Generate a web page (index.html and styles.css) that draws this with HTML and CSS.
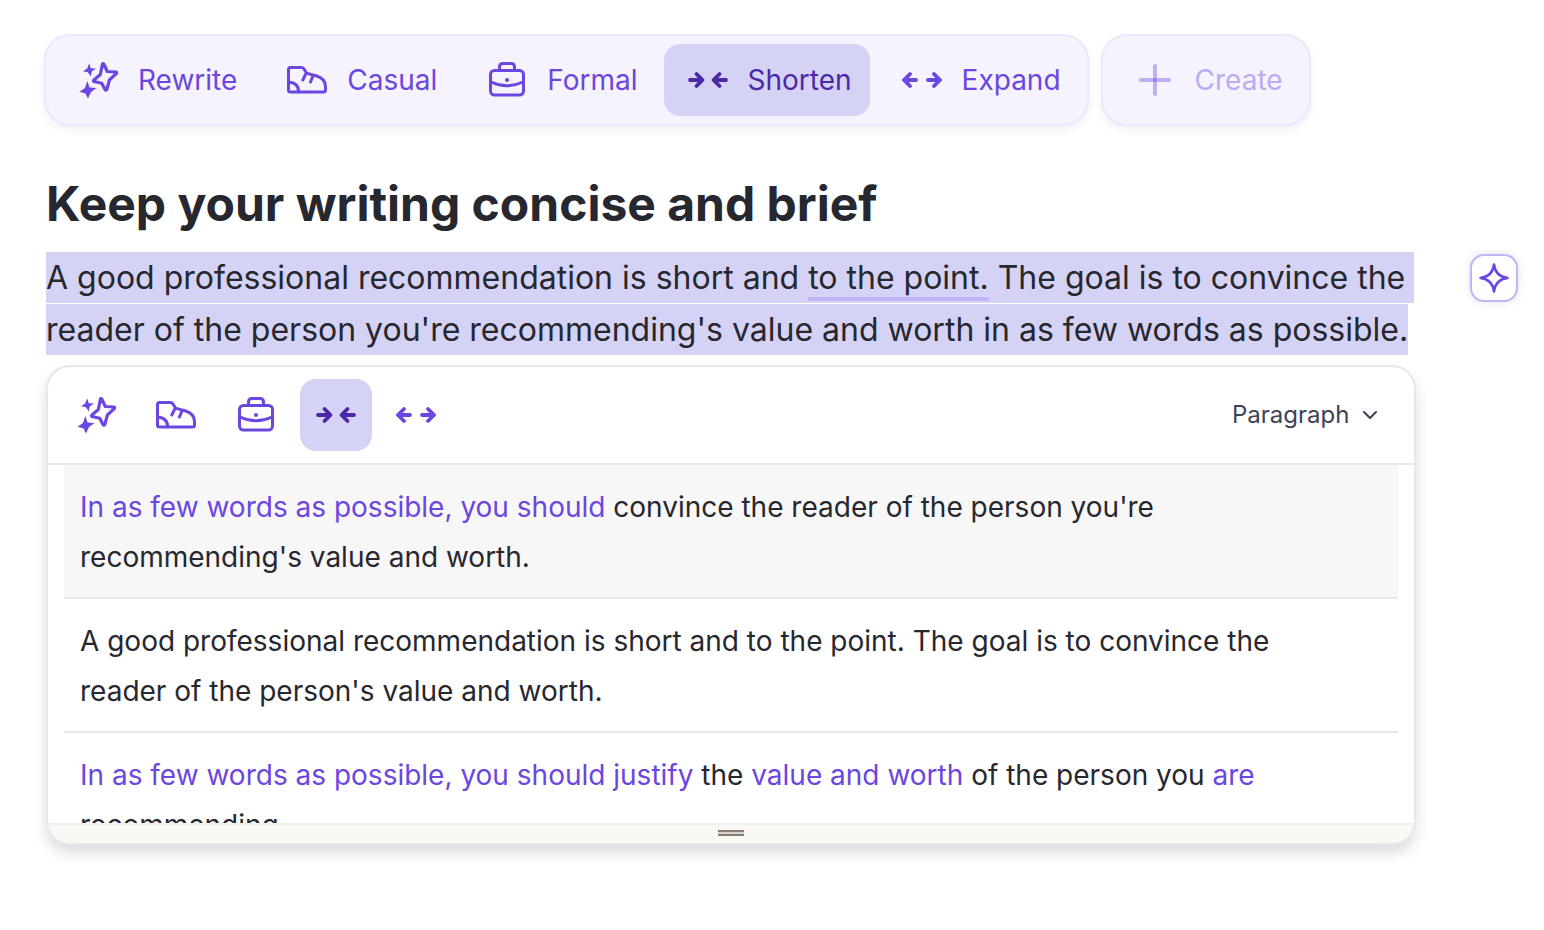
FILE: index.html
```html
<!DOCTYPE html>
<html lang="en">
<head>
<meta charset="utf-8">
<meta name="viewport" content="width=device-width, initial-scale=1">
<title>Rewriting assistant</title>
<link rel="stylesheet" href="styles.css">
</head>
<body>
<svg class="sprite" aria-hidden="true">
  <symbol id="i-rewrite" viewBox="0 0 40 40">
    <path d="M24.500 4Q25.300 2.800 26 4.500L29.300 11.500L38 12Q39.300 12.500 38.300 13.500L31.500 19.800L28.800 29.500Q27.800 31 27 29.500L23.700 23.200L16 21.500Q14.800 20.800 16 20L22.300 14.500Z" fill="none" stroke="currentColor" stroke-width="3.200" stroke-linejoin="round"/>
    <path d="M11.200 3.200L12.700 8.200L18 8.500L13.700 11.500L12.800 16.500L9.900 12.300L5 11.300L9.200 8.500ZM9.300 21L11.500 27.500L18.500 28L13 32L10 38.500L7.500 33.500L1.500 31.700L7 28Z" fill="currentColor"/>
  </symbol>
  <symbol id="i-casual" viewBox="0 0 40 40">
    <g fill="none" stroke="currentColor" stroke-width="3" stroke-linecap="round" stroke-linejoin="round">
      <path d="M3.500 7.500H14.500Q16 7.500 17 9L19 12.300Q19.700 13.300 21 13.600L29 15.700Q38.500 18.500 38.500 26.500V30Q38.500 32 36.500 32H3.500Q1.500 32 1.500 30V9.500Q1.500 7.500 3.500 7.500Z"/>
      <path d="M1.500 22.300Q11.500 22.500 11.700 32M18.500 14.500L15.800 20M25.700 16.500L23.500 22"/>
    </g>
  </symbol>
  <symbol id="i-formal" viewBox="0 0 40 40">
    <g fill="none" stroke="currentColor" stroke-width="3" stroke-linecap="round">
      <rect x="3.500" y="10.500" width="33" height="24.500" rx="4"/>
      <path d="M12.500 10V7Q12.500 3.500 16 3.500H24Q27.500 3.500 27.500 7V10M4 22Q20 29.500 36 22"/>
    </g>
    <circle cx="20" cy="20" r="2" fill="currentColor"/>
  </symbol>
  <symbol id="i-shorten" viewBox="0 0 40 40">
    <path d="M2 20H14M8.500 14L14.500 20L8.500 26M38 20H26M31.500 14L25.500 20L31.500 26" fill="none" stroke="currentColor" stroke-width="3.800" stroke-linecap="round" stroke-linejoin="round"/>
  </symbol>
  <symbol id="i-expand" viewBox="0 0 40 40">
    <path d="M14 20H2.500M8 14L2 20L8 26M26 20H37.500M32 14L38 20L32 26" fill="none" stroke="currentColor" stroke-width="3.800" stroke-linecap="round" stroke-linejoin="round"/>
  </symbol>
  <symbol id="i-plus" viewBox="0 0 40 40">
    <g stroke="#6b46e0" stroke-opacity=".4" stroke-width="4" stroke-linecap="round"><path d="M6 20H34"/><path d="M20 6V34"/></g>
  </symbol>
</svg>

<nav class="toolbars" aria-label="Writing tools">
  <div class="toolbar">
    <button class="tool" type="button"><svg class="icon" aria-hidden="true"><use href="#i-rewrite"/></svg>Rewrite</button>
    <button class="tool" type="button"><svg class="icon" aria-hidden="true"><use href="#i-casual"/></svg>Casual</button>
    <button class="tool" type="button"><svg class="icon" aria-hidden="true"><use href="#i-formal"/></svg>Formal</button>
    <button class="tool tool-active" type="button" aria-pressed="true"><svg class="icon" aria-hidden="true"><use href="#i-shorten"/></svg>Shorten</button>
    <button class="tool" type="button"><svg class="icon" aria-hidden="true"><use href="#i-expand"/></svg>Expand</button>
  </div>
  <div class="toolbar">
    <button class="tool tool-muted" type="button"><svg class="icon" aria-hidden="true"><use href="#i-plus"/></svg>Create</button>
  </div>
</nav>

<main class="editor">
  <h1 class="title">Keep your writing concise and brief</h1>
  <div class="columns">
    <div class="document">
      <p class="passage"><span class="selection">A good professional recommendation is short and <span class="hint">to the point.</span> The goal is to convince the reader of the person you're recommending's value and worth in as few words as possible.</span></p>
      <section class="card" aria-label="Suggestions">
        <header class="card-header">
          <div class="modes">
            <button class="mode" type="button" aria-label="Rewrite"><svg class="icon" aria-hidden="true"><use href="#i-rewrite"/></svg></button>
            <button class="mode" type="button" aria-label="Casual"><svg class="icon" aria-hidden="true"><use href="#i-casual"/></svg></button>
            <button class="mode" type="button" aria-label="Formal"><svg class="icon" aria-hidden="true"><use href="#i-formal"/></svg></button>
            <button class="mode mode-active" type="button" aria-label="Shorten" aria-pressed="true"><svg class="icon" aria-hidden="true"><use href="#i-shorten"/></svg></button>
            <button class="mode" type="button" aria-label="Expand"><svg class="icon" aria-hidden="true"><use href="#i-expand"/></svg></button>
          </div>
          <div class="scope">
            <select class="scope-select" aria-label="Scope"><option>Paragraph</option></select>
            <svg class="chevron" viewBox="0 0 16 16" aria-hidden="true"><path d="M2 5L8 11L14 5" fill="none" stroke="currentColor" stroke-width="2" stroke-linecap="round" stroke-linejoin="round"/></svg>
          </div>
        </header>
        <ul class="suggestions">
          <li class="suggestion suggestion-current"><em class="changed">In as few words as possible, you should</em> convince the reader of the person you're recommending's value and worth.</li>
          <li class="suggestion">A good professional recommendation is short and to the point. The goal is to convince the reader of the person's value and worth.</li>
          <li class="suggestion"><em class="changed">In as few words as possible, you should justify</em> the <em class="changed">value and worth</em> of the person you <em class="changed">are</em> recommending.</li>
        </ul>
        <footer class="card-footer"><span class="grip"></span></footer>
      </section>
    </div>
    <button class="assist" type="button" aria-label="Open assistant">
      <svg class="assist-icon" viewBox="0 0 32 32" aria-hidden="true"><path d="M16 2.500Q17.500 14.500 29.500 16Q17.500 17.500 16 29.500Q14.500 17.500 2.500 16Q14.500 14.500 16 2.500Z" fill="none" stroke="currentColor" stroke-width="2.500" stroke-linejoin="round"/></svg>
    </button>
  </div>
</main>
</body>
</html>
```
FILE: styles.css
```css
* { box-sizing: border-box; }
body {
  margin: 0;
  padding: 34px 26px 34px 44px;
  background: #fff;
  color: #27272f;
  font-family: Inter, "Liberation Sans", sans-serif;
}
button { font: inherit; color: inherit; border: 0; background: none; cursor: pointer; }
.sprite { display: none; }
.icon { width: 40px; height: 40px; flex: none; }

.toolbars { display: flex; gap: 12px; }
.toolbar {
  display: flex;
  gap: 8px;
  padding: 8px;
  border: 2px solid #ebe7fc;
  border-radius: 26px;
  background: #f5f3fe;
  box-shadow: 0 4px 8px rgba(0, 0, 0, .06);
}
.tool {
  display: flex;
  align-items: center;
  gap: 20px;
  height: 72px;
  padding: 0 18px 0 24px;
  border-radius: 16px;
  color: #6b46e0;
  font-size: 28px;
  white-space: nowrap;
}
.tool-active, .mode-active { background: #d5d3f5; color: #4b28a8; }
.tool-muted { color: #bcabf1; }

.editor { padding: 48px 0 0 2px; }
.title { margin: 0; font-size: 48px; line-height: 60px; font-weight: 700; }
.columns { display: flex; align-items: flex-start; gap: 54px; padding-top: 18px; }
.document { flex: 1; min-width: 0; }
.passage { margin: 0 0 9px; font-size: 32px; line-height: 52px; white-space: pre-wrap; }
.selection { padding: 6px 0; background: #d5d3f5; }
.hint { border-bottom: 4px solid #bfb5f7; }

.card {
  overflow: hidden;
  border: 2px solid #e5e8ec;
  border-radius: 24px;
  background: #fff;
  box-shadow: 0 8px 14px rgba(0, 0, 0, .14);
}
.card-header {
  display: flex;
  align-items: center;
  justify-content: space-between;
  padding: 12px 36px 12px 12px;
  border-bottom: 2px solid #e5e8ec;
}
.modes { display: flex; gap: 8px; }
.mode {
  display: grid;
  place-items: center;
  width: 72px;
  height: 72px;
  padding: 0;
  border-radius: 16px;
  color: #6b46e0;
}
.mode-active { color: #4b28a8; }
.scope { display: flex; align-items: center; gap: 12px; color: #3d4254; }
.scope-select {
  appearance: none;
  padding: 0;
  border: 0;
  background: none;
  color: inherit;
  font: inherit;
  font-size: 24px;
  line-height: 32px;
}
.chevron { width: 16px; height: 16px; }

.suggestions { height: 358px; margin: 0; padding: 0 16px; overflow: hidden; list-style: none; }
.suggestion { padding: 17px 64px 15px 16px; border-bottom: 2px solid #e5e8ec; font-size: 28px; line-height: 50px; }
.suggestion-current { background: #f7f7f7; }
.changed { color: #6b46e0; font-style: normal; }
.card-footer {
  display: flex;
  justify-content: center;
  height: 20px;
  padding-top: 5px;
  border-top: 2px solid #f0f1ec;
  background: #f8f8f4;
}
.grip { width: 26px; height: 6px; border: solid #8a7c6e; border-width: 2px 0; background: #d8d2cc; }

.assist {
  display: grid;
  place-items: center;
  flex: none;
  width: 48px;
  height: 48px;
  margin-top: 2px;
  padding: 0;
  border: 2px solid #bfb5f7;
  border-radius: 14px;
  background: #fff;
  color: #6b46e0;
  box-shadow: 0 0 8px rgba(0, 0, 0, .12);
}
.assist-icon { width: 32px; height: 32px; }
```
